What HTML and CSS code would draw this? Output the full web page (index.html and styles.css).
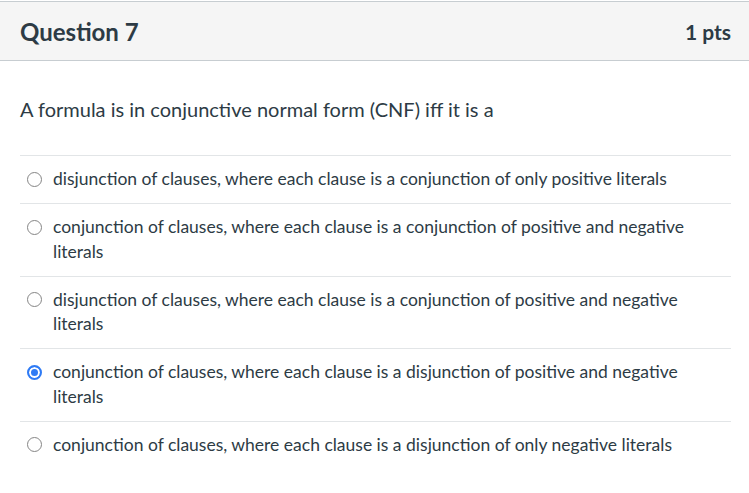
FILE: index.html
```html
<!DOCTYPE html>
<html lang="en">
<head>
  <meta charset="UTF-8" />
  <meta name="viewport" content="width=device-width, initial-scale=1.0"/>
  <title>Question 7</title>
  <link rel="stylesheet" href="styles.css">
</head>
<body>
  <div class="question">
    <div class="header">
      <h2 class="question-name">Question 7</h2>
      <span class="points">1 pts</span>
    </div>
    <div class="text">
      <p class="question-text">A formula is in conjunctive normal form (CNF) iff it is a</p>
      <div class="answers">
        <label class="answer">
          <input type="radio" name="q7">
          <span>disjunction of clauses, where each clause is a conjunction of only positive literals</span>
        </label>
        <label class="answer">
          <input type="radio" name="q7">
          <span>conjunction of clauses, where each clause is a conjunction of positive and negative literals</span>
        </label>
        <label class="answer">
          <input type="radio" name="q7">
          <span>disjunction of clauses, where each clause is a conjunction of positive and negative literals</span>
        </label>
        <label class="answer">
          <input type="radio" name="q7" checked>
          <span>conjunction of clauses, where each clause is a disjunction of positive and negative literals</span>
        </label>
        <label class="answer">
          <input type="radio" name="q7">
          <span>conjunction of clauses, where each clause is a disjunction of only negative literals</span>
        </label>
      </div>
    </div>
  </div>
</body>
</html>
```

FILE: styles.css
```css
body {
  margin: 0;
  font-family: Lato, "Open Sans", sans-serif;
  color: #2d3b45;
  background: #fff;
}
.question {
  margin-top: 1px;
  border-top: 1px solid #c7cdd1;
}
.header {
  display: flex;
  align-items: center;
  justify-content: space-between;
  height: 58px;
  padding: 0 18px 0 20px;
  background: #f5f5f5;
  border-bottom: 1px solid #c7cdd1;
}
.question-name {
  margin: 0;
  font-size: 24px;
  font-weight: bold;
}
.points {
  font-size: 21px;
  font-weight: bold;
}
.text {
  padding: 0 18px 0 20px;
}
.question-text {
  margin: 35px 0 32px;
  font-size: 20px;
  line-height: 27px;
}
.answer {
  display: flex;
  align-items: flex-start;
  gap: 11px;
  padding: 11px 0 11.5px;
  border-top: 1px solid #e2e5e7;
  font-size: 17.5px;
  line-height: 24.5px;
}
.answer input {
  appearance: none;
  flex: none;
  width: 15px;
  height: 15px;
  margin: 4.5px 0 0 7px;
  border: 1px solid #858585;
  border-radius: 50%;
  background: #fff;
}
.answer input:checked {
  border: 2px solid #2f7bf5;
  background: #2f7bf5;
  box-shadow: inset 0 0 0 2px #fff;
}
```
